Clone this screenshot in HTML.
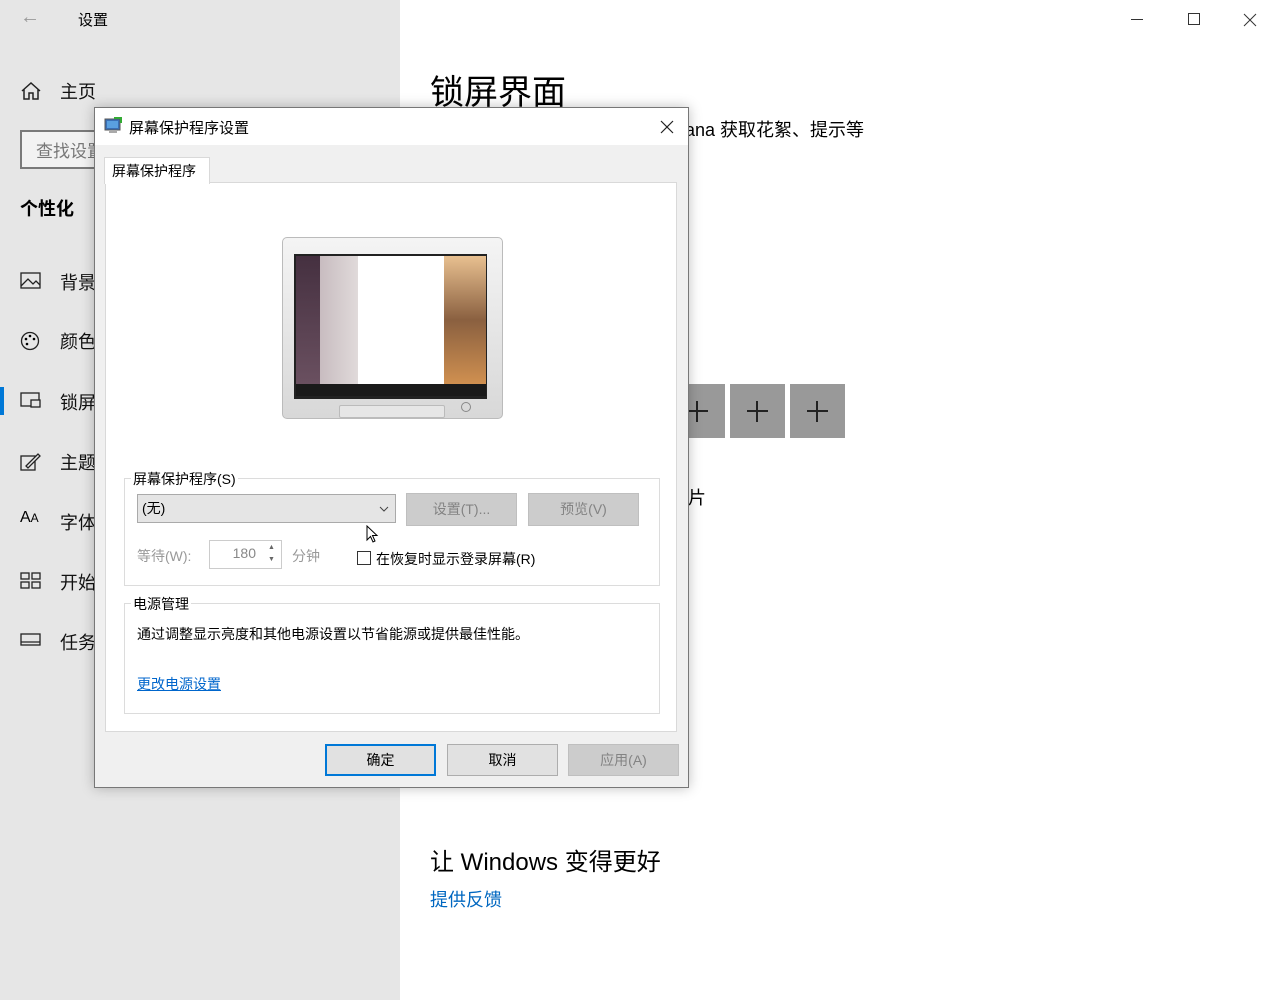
<!DOCTYPE html>
<html><head><meta charset="utf-8"><style>
*{margin:0;padding:0;box-sizing:border-box}
body{width:1280px;height:1000px;position:relative;background:#fff;font-family:"Liberation Sans","Noto Sans CJK SC",sans-serif;color:#000;overflow:hidden}
.a{position:absolute}
.side{left:0;top:0;width:400px;height:1000px;background:#e6e6e6}
.nav{font-size:18px;color:#111}
.btn{position:absolute;height:32px;border:1px solid #adadad;background:#e1e1e1;font-size:14px;text-align:center;line-height:30px}
.dis{background:#cccccc;border-color:#bfbfbf;color:#838383}
.plus{position:absolute;top:384px;width:55px;height:54px;background:#999}
.plus:before{content:"";position:absolute;left:17px;top:26px;width:21px;height:2px;background:#222}
.plus:after{content:"";position:absolute;left:26px;top:17px;width:2px;height:21px;background:#222}
</style></head><body>
<div class="a side"></div>
<div class="a" style="left:20px;top:6px;font-size:20px;color:#999">←</div>
<div class="a" style="left:78px;top:9px;font-size:15px">设置</div>
<svg class="a" style="left:20px;top:81px" width="22" height="20" viewBox="0 0 22 20"><path d="M2 10 L11 2 L20 10 M4 8 V18 H9 V12 H13 V18 H18 V8" fill="none" stroke="#222" stroke-width="1.5"/></svg>
<div class="a nav" style="left:60px;top:78px">主页</div>
<div class="a" style="left:20px;top:130px;width:120px;height:39px;border:2px solid #7a7a7a;background:#f2f2f2"></div>
<div class="a" style="left:36px;top:137px;font-size:17px;color:#777">查找设置</div>
<div class="a" style="left:20px;top:195px;font-size:18px;font-weight:bold">个性化</div>
<svg class="a" style="left:20px;top:272px" width="22" height="18"><rect x="1" y="1" width="19" height="15" fill="none" stroke="#222" stroke-width="1.3"/><path d="M1 14 L8 7 L13 12 L16 9 L20 13" fill="none" stroke="#222" stroke-width="1.3"/></svg>
<div class="a nav" style="left:60px;top:269px">背景</div>
<svg class="a" style="left:20px;top:331px" width="22" height="20"><circle cx="10" cy="10" r="8.5" fill="none" stroke="#222" stroke-width="1.3"/><circle cx="6" cy="8" r="1.3"/><circle cx="10" cy="5" r="1.3"/><circle cx="14" cy="8" r="1.3"/><circle cx="7" cy="13" r="1.3"/></svg>
<div class="a nav" style="left:60px;top:328px">颜色</div>
<div class="a" style="left:0;top:387px;width:4px;height:28px;background:#0078d7"></div>
<svg class="a" style="left:20px;top:392px" width="22" height="18"><rect x="1" y="1" width="18" height="13" fill="none" stroke="#222" stroke-width="1.3"/><rect x="11" y="8" width="9" height="7" fill="#e6e6e6" stroke="#222" stroke-width="1.3"/></svg>
<div class="a nav" style="left:60px;top:389px">锁屏</div>
<svg class="a" style="left:20px;top:452px" width="22" height="20"><rect x="1" y="4" width="14" height="14" fill="none" stroke="#222" stroke-width="1.3"/><path d="M6 14 L18 2 L20 4 L8 16 Z" fill="#e6e6e6" stroke="#222" stroke-width="1.3"/></svg>
<div class="a nav" style="left:60px;top:449px">主题</div>
<div class="a" style="left:20px;top:509px;font-size:16px">A<span style="font-size:12px">A</span></div>
<div class="a nav" style="left:60px;top:509px">字体</div>
<svg class="a" style="left:20px;top:572px" width="22" height="18"><rect x="1" y="1" width="8" height="6" fill="none" stroke="#222" stroke-width="1.3"/><rect x="12" y="1" width="8" height="6" fill="none" stroke="#222" stroke-width="1.3"/><rect x="1" y="10" width="8" height="6" fill="none" stroke="#222" stroke-width="1.3"/><rect x="12" y="10" width="8" height="6" fill="none" stroke="#222" stroke-width="1.3"/></svg>
<div class="a nav" style="left:60px;top:569px">开始</div>
<svg class="a" style="left:20px;top:633px" width="22" height="14"><rect x="1" y="1" width="19" height="11" fill="none" stroke="#222" stroke-width="1.3"/><line x1="1" y1="9" x2="20" y2="9" stroke="#222" stroke-width="1.3"/></svg>
<div class="a nav" style="left:60px;top:629px">任务</div>

<div class="a" style="left:1131px;top:19px;width:12px;height:1px;background:#333"></div>
<div class="a" style="left:1188px;top:13px;width:12px;height:12px;border:1px solid #333"></div>
<svg class="a" style="left:1243px;top:13px" width="14" height="14"><path d="M1 1 L13 13 M13 1 L1 13" stroke="#333" stroke-width="1"/></svg>

<div class="a" style="left:430px;top:65px;font-size:34px">锁屏界面</div>
<div class="a" style="left:685px;top:116px;font-size:18px">ana 获取花絮、提示等</div>
<div class="plus" style="left:670px"></div>
<div class="plus" style="left:730px"></div>
<div class="plus" style="left:790px"></div>
<div class="a" style="left:670px;top:484px;font-size:18px">图片</div>
<div class="a" style="left:430px;top:842px;font-size:24px">让 Windows 变得更好</div>
<div class="a" style="left:430px;top:886px;font-size:18px;color:#0067c0">提供反馈</div>

<!-- dialog -->
<div class="a" style="left:94px;top:107px;width:595px;height:681px;background:#f0f0f0;border:1px solid #777;box-shadow:0 0 12px rgba(0,0,0,.25);overflow:hidden">
 <div class="a" style="left:0;top:0;width:593px;height:37px;background:#fff"></div>
 <svg class="a" style="left:9px;top:9px" width="18" height="18"><rect x="1" y="2" width="15" height="11" fill="#3a6fb5" stroke="#555"/><rect x="3" y="4" width="11" height="7" fill="#5aa0e0"/><rect x="5" y="13" width="8" height="3" fill="#aaa"/><path d="M10 1 L17 1 L17 6" fill="none" stroke="#3a3" stroke-width="2"/></svg>
 <div class="a" style="left:34px;top:9px;font-size:15px">屏幕保护程序设置</div>
 <svg class="a" style="left:565px;top:12px" width="14" height="14"><path d="M1 1 L13 13 M13 1 L1 13" stroke="#222" stroke-width="1.2"/></svg>
 <div class="a" style="left:10px;top:74px;width:572px;height:550px;background:#fff;border:1px solid #d9d9d9"></div>
 <div class="a" style="left:9px;top:49px;width:106px;height:27px;background:#fff;border:1px solid #d9d9d9;border-bottom:none;font-size:14px;padding:3px 0 0 7px">屏幕保护程序</div>
 <!-- monitor -->
 <div class="a" style="left:187px;top:129px;width:221px;height:182px;background:linear-gradient(#f4f4f4,#d8d8d8);border:1px solid #bbb;border-radius:5px"></div>
 <div class="a" style="left:199px;top:146px;width:193px;height:145px;background:#222"></div>
 <div class="a" style="left:201px;top:148px;width:24px;height:128px;background:linear-gradient(#453040,#6a5060)"></div>
 <div class="a" style="left:225px;top:148px;width:38px;height:128px;background:linear-gradient(90deg,#c8bcc0,#e0dada)"></div>
 <div class="a" style="left:263px;top:148px;width:86px;height:128px;background:#fff"></div>
 <div class="a" style="left:349px;top:148px;width:42px;height:128px;background:linear-gradient(#e8c090,#8a6040 50%,#d09050)"></div>
 <div class="a" style="left:201px;top:276px;width:190px;height:12px;background:#1a1a1a"></div>
 <div class="a" style="left:244px;top:297px;width:106px;height:13px;border:1px solid #bbb;border-radius:2px;background:#e6e6e6"></div>
 <div class="a" style="left:366px;top:294px;width:10px;height:10px;border:1px solid #888;border-radius:50%"></div>
 <!-- group 1 -->
 <div class="a" style="left:29px;top:370px;width:536px;height:108px;border:1px solid #dcdcdc"></div>
 <div class="a" style="left:36px;top:361px;font-size:14px;background:#fff;padding:0 2px">屏幕保护程序(S)</div>
 <div class="a" style="left:42px;top:386px;width:259px;height:29px;background:#e5e5e5;border:1px solid #aaa;font-size:14px;line-height:27px;padding-left:4px">(无)<svg style="position:absolute;right:6px;top:11px" width="10" height="6"><path d="M1 1 L5 5 L9 1" fill="none" stroke="#444"/></svg></div>
 <div class="btn dis" style="left:311px;top:385px;width:111px;height:33px">设置(T)...</div>
 <div class="btn dis" style="left:433px;top:385px;width:111px;height:33px">预览(V)</div>
 <div class="a" style="left:42px;top:438px;font-size:14px;color:#999">等待(W):</div>
 <div class="a" style="left:114px;top:432px;width:73px;height:29px;border:1px solid #ccc;background:#fff;font-size:14px;color:#888;text-align:right;padding:4px 25px 0 0">180</div>
 <div class="a" style="left:173px;top:434px;font-size:7px;color:#666;line-height:12px">▲<br>▼</div>
 <div class="a" style="left:197px;top:438px;font-size:14px;color:#999">分钟</div>
 <div class="a" style="left:262px;top:443px;width:14px;height:14px;border:1px solid #333;background:#fff"></div>
 <div class="a" style="left:281px;top:441px;font-size:14px">在恢复时显示登录屏幕(R)</div>
 <!-- group 2 -->
 <div class="a" style="left:29px;top:495px;width:536px;height:111px;border:1px solid #dcdcdc"></div>
 <div class="a" style="left:36px;top:486px;font-size:14px;background:#fff;padding:0 2px">电源管理</div>
 <div class="a" style="left:42px;top:516px;font-size:14px">通过调整显示亮度和其他电源设置以节省能源或提供最佳性能。</div>
 <div class="a" style="left:42px;top:566px;font-size:14px;color:#0066cc;text-decoration:underline">更改电源设置</div>
 <div class="btn" style="left:230px;top:636px;width:111px;border:2px solid #0078d7;line-height:28px">确定</div>
 <div class="btn" style="left:352px;top:636px;width:111px">取消</div>
 <div class="btn dis" style="left:473px;top:636px;width:111px">应用(A)</div>
</div>
<svg class="a" style="left:366px;top:525px" width="14" height="20"><path d="M1 1 L1 15 L4.5 11.5 L7 17 L9 16 L6.5 10.5 L11 10.5 Z" fill="#fff" stroke="#000"/></svg>
</body></html>
